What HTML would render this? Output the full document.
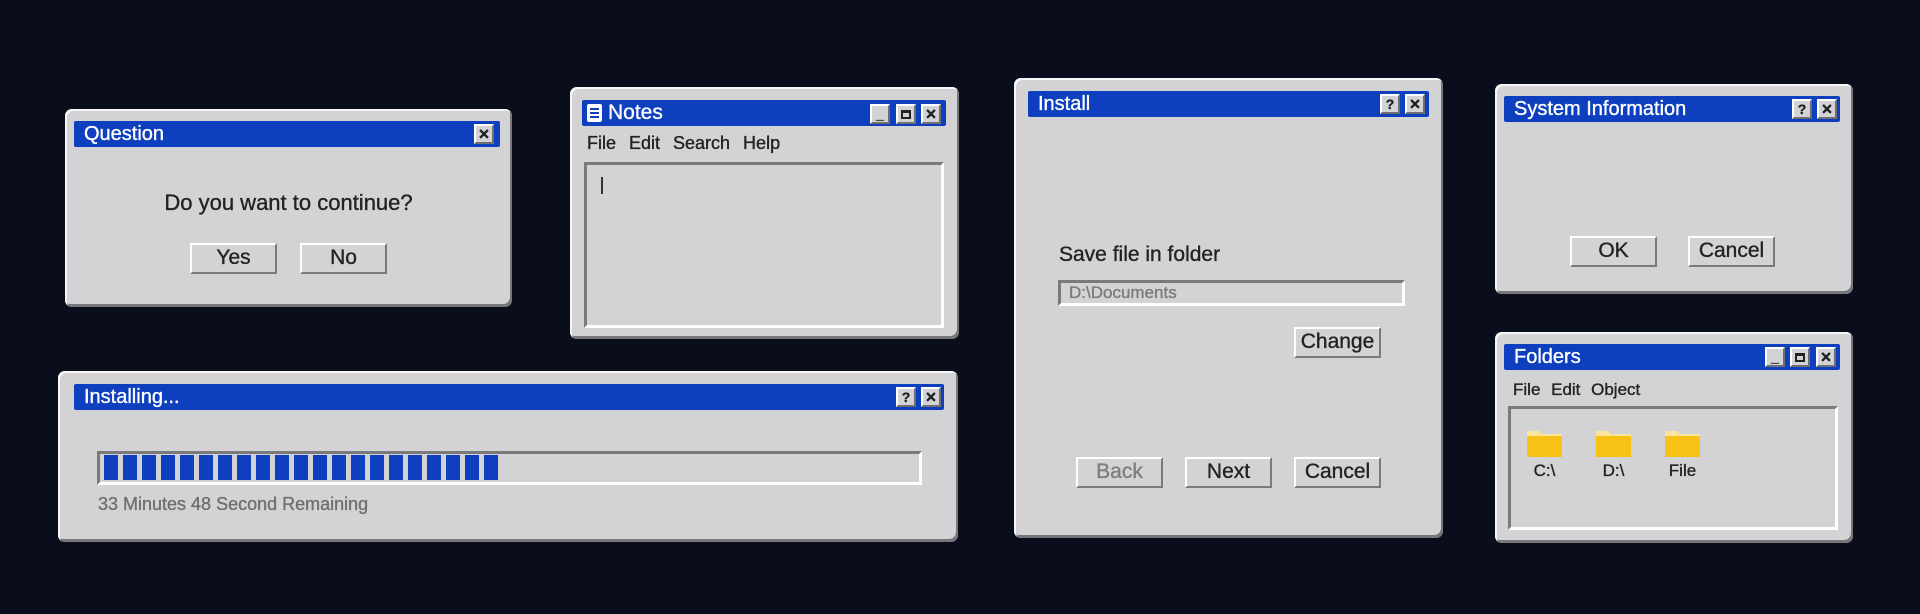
<!DOCTYPE html>
<html><head><meta charset="utf-8"><style>
*{box-sizing:border-box;margin:0;padding:0}
body{width:1920px;height:614px;background:#0a0d1b;position:relative;overflow:hidden;font-family:"Liberation Sans",Arial,sans-serif;color:#222;-webkit-text-stroke:0.35px currentColor}
.w{position:absolute;background:#d3d3d5;border-radius:7px;box-shadow:inset 2px 2px 0 #f6f6f6,inset -2px -3px 0 #77777a}
.t{position:absolute;background:#0e3fbe;border-radius:2px;color:#fff;font-size:20px;line-height:26px;padding-left:10px;height:26px}
.b{position:absolute;width:20px;height:20px;background:#d3d3d5;border-top:2px solid #fff;border-left:2px solid #fff;border-right:2px solid #6f6f6f;border-bottom:2px solid #6f6f6f;font-size:14px;font-weight:bold;line-height:16px;text-align:center;color:#222}
.btn{position:absolute;height:31px;width:87px;background:#d3d3d5;border-top:2px solid #fff;border-left:2px solid #fff;border-right:2px solid #7a7a7a;border-bottom:2px solid #7a7a7a;text-align:center;font-size:21px;line-height:26px;color:#222}
.sk{position:absolute;border-top:3px solid #7a7a7a;border-left:3px solid #7a7a7a;border-right:3px solid #fff;border-bottom:3px solid #fff;background:#d3d3d5}
.tx{position:absolute;white-space:nowrap}
.fold{position:absolute;width:37px;height:30px}
</style></head><body>

<!-- Question -->
<div class="w" style="left:65px;top:109px;width:447px;height:198px"></div>
<div class="t" style="left:74px;top:121px;width:426px">Question</div>
<div class="b" style="left:474px;top:124px">✕</div>
<div class="tx" style="left:65px;width:447px;text-align:center;top:190px;font-size:22px">Do you want to continue?</div>
<div class="btn" style="left:190px;top:243px">Yes</div>
<div class="btn" style="left:300px;top:243px">No</div>

<!-- Notes -->
<div class="w" style="left:570px;top:87px;width:389px;height:252px"></div>
<div class="t" style="left:582px;top:100px;width:364px;font-size:21px;padding-left:26px">Notes</div>
<svg style="position:absolute;left:587px;top:104px" width="15" height="18" viewBox="0 0 15 18"><rect width="15" height="18" rx="2" fill="#fff"/><rect x="3" y="4" width="9" height="2" fill="#0e3fbe"/><rect x="3" y="8" width="9" height="2" fill="#0e3fbe"/><rect x="3" y="12" width="9" height="2" fill="#0e3fbe"/></svg>
<div class="b" style="left:870px;top:104px">_</div>
<div class="b" style="left:896px;top:104px"><span style="display:inline-block;width:10px;height:9px;border:2px solid #222;border-top-width:3px;margin-top:3px"></span></div>
<div class="b" style="left:921px;top:104px">✕</div>
<div class="tx" style="left:587px;top:133px;font-size:18px;word-spacing:8px">File Edit Search Help</div>
<div class="sk" style="left:584px;top:162px;width:360px;height:166px"></div>
<div style="position:absolute;left:601px;top:177px;width:2px;height:17px;background:#333"></div>

<!-- Installing -->
<div class="w" style="left:58px;top:371px;width:900px;height:171px"></div>
<div class="t" style="left:74px;top:384px;width:870px">Installing...</div>
<div class="b" style="left:896px;top:387px">?</div>
<div class="b" style="left:921px;top:387px">✕</div>
<div class="sk" style="left:97px;top:451px;width:825px;height:34px"></div>
<div style="position:absolute;left:104px;top:455px;width:394px;height:25px;background:repeating-linear-gradient(90deg,#0e3fbe 0 14px,transparent 14px 19px)"></div>
<div class="tx" style="left:98px;top:494px;font-size:18px;color:#6f6f6f">33 Minutes 48 Second Remaining</div>

<!-- Install -->
<div class="w" style="left:1014px;top:78px;width:429px;height:460px"></div>
<div class="t" style="left:1028px;top:91px;width:401px">Install</div>
<div class="b" style="left:1380px;top:94px">?</div>
<div class="b" style="left:1405px;top:94px">✕</div>
<div class="tx" style="left:1059px;top:243px;font-size:21px">Save file in folder</div>
<div class="sk" style="left:1058px;top:280px;width:347px;height:26px;line-height:20px;padding-left:8px;font-size:17px;color:#7a7a7a">D:\Documents</div>
<div class="btn" style="left:1294px;top:327px">Change</div>
<div class="btn" style="left:1076px;top:457px;color:#7d7d7d">Back</div>
<div class="btn" style="left:1185px;top:457px">Next</div>
<div class="btn" style="left:1294px;top:457px">Cancel</div>

<!-- System Information -->
<div class="w" style="left:1495px;top:84px;width:358px;height:210px"></div>
<div class="t" style="left:1504px;top:96px;width:336px">System Information</div>
<div class="b" style="left:1792px;top:99px">?</div>
<div class="b" style="left:1817px;top:99px">✕</div>
<div class="btn" style="left:1570px;top:236px">OK</div>
<div class="btn" style="left:1688px;top:236px">Cancel</div>

<!-- Folders -->
<div class="w" style="left:1495px;top:332px;width:358px;height:211px"></div>
<div class="t" style="left:1504px;top:344px;width:336px">Folders</div>
<div class="b" style="left:1765px;top:347px">_</div>
<div class="b" style="left:1790px;top:347px"><span style="display:inline-block;width:10px;height:9px;border:2px solid #222;border-top-width:3px;margin-top:3px"></span></div>
<div class="b" style="left:1816px;top:347px">✕</div>
<div class="tx" style="left:1513px;top:380px;font-size:17px;word-spacing:6px">File Edit Object</div>
<div class="sk" style="left:1508px;top:406px;width:330px;height:124px"></div>
<svg class="fold" style="left:1526px;top:428px" viewBox="0 0 37 30"><path d="M1 3h12l3 3h20v23H1z" fill="#f7c117"/><path d="M1 3h12l3 3h20v2H1z" fill="#fbe3a0"/></svg>
<svg class="fold" style="left:1595px;top:428px" viewBox="0 0 37 30"><path d="M1 3h12l3 3h20v23H1z" fill="#f7c117"/><path d="M1 3h12l3 3h20v2H1z" fill="#fbe3a0"/></svg>
<svg class="fold" style="left:1664px;top:428px" viewBox="0 0 37 30"><path d="M1 3h12l3 3h20v23H1z" fill="#f7c117"/><path d="M1 3h12l3 3h20v2H1z" fill="#fbe3a0"/></svg>
<div class="tx" style="left:1526px;width:37px;text-align:center;top:461px;font-size:17px">C:\</div>
<div class="tx" style="left:1595px;width:37px;text-align:center;top:461px;font-size:17px">D:\</div>
<div class="tx" style="left:1664px;width:37px;text-align:center;top:461px;font-size:17px">File</div>
</body></html>
